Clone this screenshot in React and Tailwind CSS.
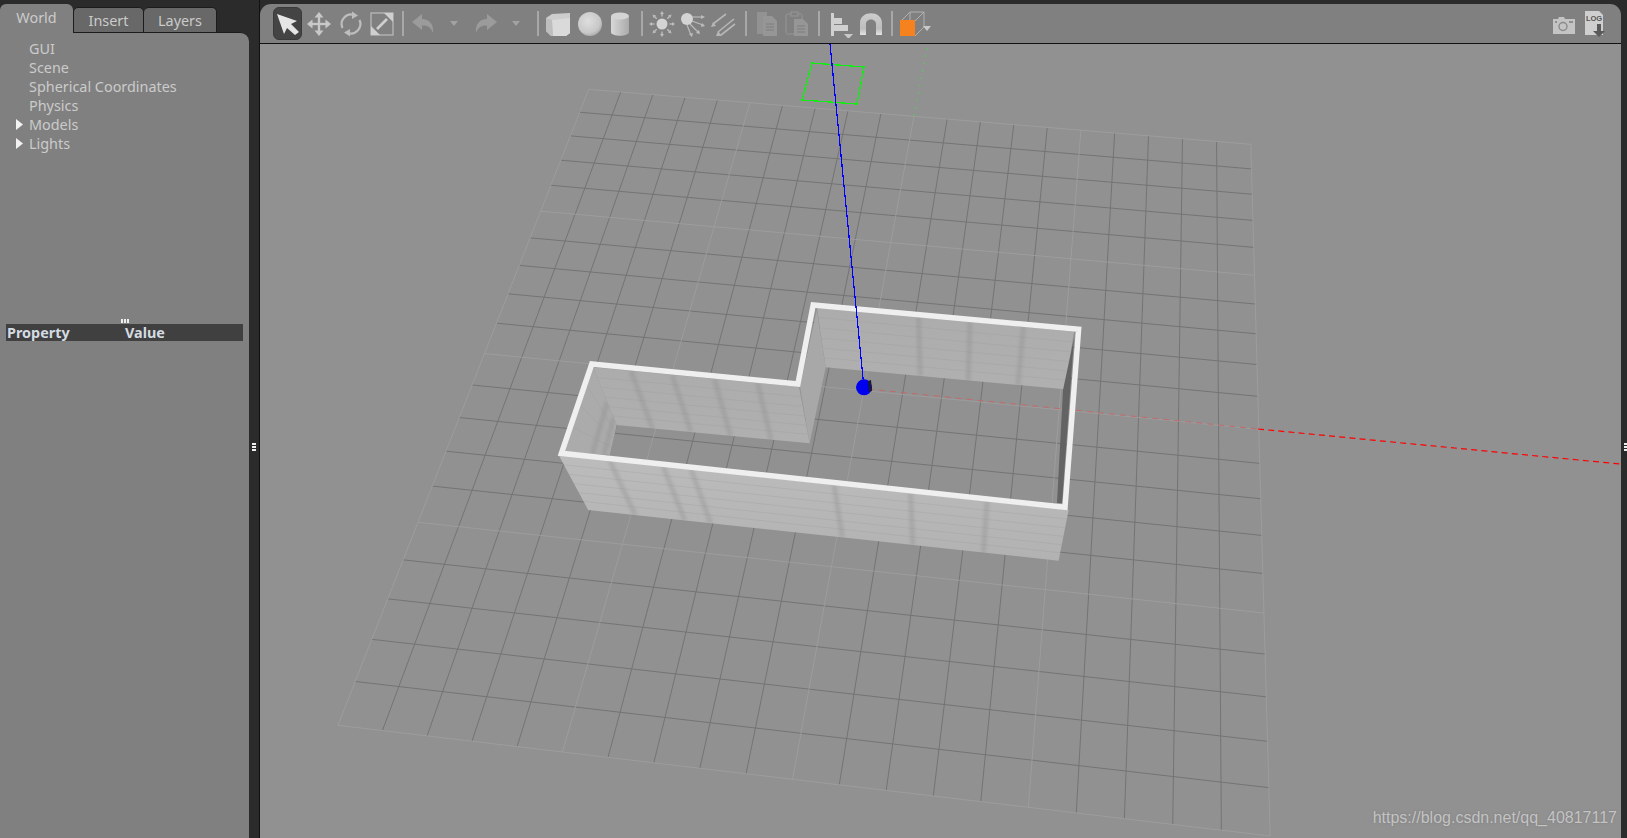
import React from "react";

const GRID = [[588.7, 89.3], [1250.8, 144.3], [1270.2, 836], [337.9, 725.3]];

function homography([p0, p1, p2, p3]) {
  const [x0, y0] = p0, [x1, y1] = p1, [x2, y2] = p2, [x3, y3] = p3;
  const dx1 = x1 - x2, dx2 = x3 - x2, sx = x0 - x1 + x2 - x3;
  const dy1 = y1 - y2, dy2 = y3 - y2, sy = y0 - y1 + y2 - y3;
  const det = dx1 * dy2 - dx2 * dy1;
  const g = (sx * dy2 - dx2 * sy) / det;
  const h = (dx1 * sy - sx * dy1) / det;
  const a = x1 - x0 + g * x1, b = x3 - x0 + h * x3;
  const d = y1 - y0 + g * y1, e = y3 - y0 + h * y3;
  return (u, v) => {
    const w = g * u + h * v + 1;
    return [(a * u + b * v + x0) / w, (d * u + e * v + y0) / w];
  };
}

const pts = (arr) => arr.map((p) => p.join(",")).join(" ");

function Grid() {
  const H = homography(GRID);
  const lines = [];
  for (let i = 0; i <= 20; i++) {
    const major = i % 5 === 0;
    const [a, b] = [H(i / 20, 0), H(i / 20, 1)];
    const [c, d] = [H(0, i / 20), H(1, i / 20)];
    const color = major ? "#9f9f9f" : "#747474";
    lines.push({ major, a, b, color, k: "v" + i }, { major, a: c, b: d, color, k: "h" + i });
  }
  lines.sort((x, y) => x.major - y.major);
  return lines.map((l) => (
    <line key={l.k} x1={l.a[0]} y1={l.a[1]} x2={l.b[0]} y2={l.b[1]} stroke={l.color} strokeWidth={l.major ? 0.8 : 1} />
  ));
}

function Wall({ quad, fill, streaks, courses = 5, streakColor = "#858585", courseColor = "#9a9a9a", id }) {
  const H = homography(quad);
  return (
    <g>
      <polygon points={pts(quad)} fill={fill} />
      {Array.from({ length: courses }, (_, i) => {
        const a = H(0, (i + 1) / (courses + 1));
        const b = H(1, (i + 1) / (courses + 1));
        return <line key={id + "c" + i} x1={a[0]} y1={a[1]} x2={b[0]} y2={b[1]} stroke={courseColor} strokeWidth="0.7" opacity="0.4" />;
      })}
      {streaks.map((u, i) => {
        const a = H(u, 0), b = H(u, 1);
        return (
          <line key={id + "s" + i} x1={a[0]} y1={a[1]} x2={b[0]} y2={b[1]} stroke={streakColor} strokeWidth="5" opacity="0.28" filter="url(#soft)" />
        );
      })}
    </g>
  );
}

function Scene() {
  return (
    <svg viewBox="260 44 1361 794" className="block w-full h-full">
      <defs>
        <filter id="soft" x="-200%" y="-20%" width="500%" height="140%" filterUnits="objectBoundingBox">
          <feGaussianBlur stdDeviation="1.6" />
        </filter>
        <linearGradient id="frontWall" x1="0" y1="0" x2="0" y2="1">
          <stop offset="0" stopColor="#bcbcbc" />
          <stop offset="1" stopColor="#b2b2b2" />
        </linearGradient>
        <linearGradient id="backWall" x1="0" y1="0" x2="0" y2="1">
          <stop offset="0" stopColor="#acacac" />
          <stop offset="1" stopColor="#b0b0b0" />
        </linearGradient>
      </defs>
      <Grid />
      {/* faded and bright X axis */}
      <line x1="868" y1="389" x2="1258" y2="429" stroke="#c46a6a" strokeWidth="1" strokeDasharray="6 5" />
      {/* green Y axis */}
      <line x1="927" y1="48" x2="914" y2="116" stroke="#3fe03f" strokeWidth="1" strokeDasharray="1.5 6" />
      {/* walls */}
      <Wall id="lf" quad={[[592.9, 367.3], [616.8, 425], [609.6, 455], [561.4, 451.7]]} fill="#ababab" streaks={[0.35, 0.7]} courses={3} />
      <Wall id="bk" quad={[[816.8, 306.7], [1074, 331.7], [1065, 389.3], [825.7, 367.3]]} fill="url(#backWall)" streaks={[0.39, 0.59, 0.8]} />
      <Wall id="sd" quad={[[816.8, 310], [825.7, 367.3], [809.6, 443.3], [800, 386.7]]} fill="#a8a8a8" streaks={[]} courses={0} />
      <Wall id="lb" quad={[[592.9, 367.3], [799, 386.7], [809.6, 443.3], [616.8, 425]]} fill="url(#backWall)" streaks={[0.185, 0.385, 0.59, 0.8]} />
      <polygon points={pts([[1074, 338.3], [1063, 390], [1057, 503], [1062, 503]])} fill="#636363" />
      <Wall id="fr" quad={[[558.6, 455], [1068.6, 510], [1058.6, 560.7], [588.2, 510]]} fill="url(#frontWall)" streaks={[0.1, 0.205, 0.26, 0.54, 0.69, 0.84]} />
      {/* wall top rim */}
      <polygon
        points="591.8,364 797.9,384 813.2,305 1078.6,329.3 1065,507.3 561.4,453.3"
        fill="none"
        stroke="#efefef"
        strokeWidth="5.5"
        strokeLinejoin="miter"
      />
      {/* Z axis + gizmo */}
      <polygon points="812,63 864,67 857,104 802,100" fill="none" stroke="#10f010" strokeWidth="1.3" shapeRendering="crispEdges" />
      <line x1="830" y1="44" x2="864" y2="388" stroke="#0000ff" strokeWidth="1.2" shapeRendering="crispEdges" />
      <circle cx="864" cy="387.3" r="8" fill="#0000f0" />
      <path d="M868 381 L871 380 L872 391 L869 392 Z" fill="#1a1a30" />
      <line x1="1258" y1="429" x2="1620" y2="464" stroke="#ff0000" strokeWidth="1.2" strokeDasharray="6 4.2" />
    </svg>
  );
}

const C = "#c8c8c8";
const D = "#9b9b9b";

function Slot({ className, children }) {
  return <div className={"flex justify-center items-center shrink-0 " + className}>{children}</div>;
}

const Svg = ({ children, w = 28, h = 28, className = "" }) => (
  <svg width={w} height={h} viewBox={`0 0 ${w} ${h}`} className={"shrink-0 block " + className}>
    {children}
  </svg>
);

const Sep = ({ className }) => (
  <Slot className={className}>
    <div className="w-[2px] h-[25px] bg-[#a8a8a8] shrink-0" />
  </Slot>
);

const Drop = ({ className, color = "#a2a2a2" }) => (
  <Slot className={className}>
    <Svg w={10} h={6}>
      <polygon points="1,0 9,0 5,5" fill={color} />
    </Svg>
  </Slot>
);

const Arrow4 = () => (
  <Svg>
    <g fill={C}>
      <rect x="12.8" y="6" width="2.4" height="16" />
      <rect x="6" y="12.8" width="16" height="2.4" />
      <polygon points="14,2 18.5,7.5 9.5,7.5" />
      <polygon points="14,26 18.5,20.5 9.5,20.5" />
      <polygon points="2,14 7.5,9.5 7.5,18.5" />
      <polygon points="26,14 20.5,9.5 20.5,18.5" />
    </g>
  </Svg>
);

const Rotate = () => (
  <Svg>
    <g fill="none" stroke="#bdbdbd" strokeWidth="2.2">
      <path d="M5.5 18 A9.5 9.5 0 0 1 17 5" />
      <path d="M22.5 10 A9.5 9.5 0 0 1 11 23" />
    </g>
    <polygon points="15,1.5 21,5.5 15,9" fill="#bdbdbd" />
    <polygon points="13,19 7,22.5 13,26.5" fill="#bdbdbd" />
  </Svg>
);

const Scale = () => (
  <Svg>
    <rect x="3" y="3" width="22" height="22" fill="none" stroke="#bdbdbd" strokeWidth="1.2" />
    <line x1="8" y1="20" x2="20" y2="8" stroke="#808080" strokeWidth="8" />
    <line x1="9" y1="19" x2="19" y2="9" stroke="#cfcfcf" strokeWidth="2.6" />
    <polygon points="25,3 25,12 16,3" fill="#cfcfcf" />
    <polygon points="3,25 3,16 12,25" fill="#cfcfcf" />
  </Svg>
);

const Undo = ({ flip }) => (
  <Svg className={flip ? "-scale-x-100" : ""}>
    <path d="M3 12 L13 4 L13 9 C20 9 25 14 24 23 C22 17 18 15 13 15.5 L13 20 Z" fill={D} />
  </Svg>
);

const Box = () => (
  <Svg>
    <polygon points="2,8 8,4 26,3 26,23 22,26 7,26 2,21" fill="#cdcdcd" />
    <polygon points="8,10 26,8 26,23 22,26 9,26" fill="#dadada" />
    <polygon points="2,8 8,10 9,26 7,26 2,21" fill="#bebebe" />
  </Svg>
);

const Sphere = () => (
  <Svg>
    <defs>
      <radialGradient id="sph" cx="0.42" cy="0.38" r="0.7">
        <stop offset="0" stopColor="#dedede" />
        <stop offset="0.7" stopColor="#c8c8c8" />
        <stop offset="1" stopColor="#a0a0a0" />
      </radialGradient>
    </defs>
    <circle cx="14" cy="14" r="12" fill="url(#sph)" />
  </Svg>
);

const Cylinder = () => (
  <Svg>
    <defs>
      <linearGradient id="cyl" x1="0" y1="0" x2="1" y2="0">
        <stop offset="0" stopColor="#d8d8d8" />
        <stop offset="1" stopColor="#aaaaaa" />
      </linearGradient>
    </defs>
    <path d="M5 6 V22 C5 27 23 27 23 22 V6 Z" fill="url(#cyl)" />
    <ellipse cx="14" cy="6" rx="9" ry="3.5" fill="#d4d4d4" />
  </Svg>
);

const Sun = () => (
  <Svg>
    <circle cx="14" cy="14" r="5.5" fill="#d4d4d4" />
    <g stroke="#bdbdbd" strokeWidth="1.4">
      <line x1="14" y1="6.5" x2="14" y2="3" />
      <line x1="14" y1="21.5" x2="14" y2="25" />
      <line x1="6.5" y1="14" x2="3" y2="14" />
      <line x1="21.5" y1="14" x2="25" y2="14" />
      <line x1="8.7" y1="8.7" x2="6" y2="6" />
      <line x1="19.3" y1="8.7" x2="22" y2="6" />
      <line x1="8.7" y1="19.3" x2="6" y2="22" />
      <line x1="19.3" y1="19.3" x2="22" y2="22" />
    </g>
    <g fill="#bdbdbd">
      <polygon points="14,1 16,4 12,4" />
      <polygon points="14,27 16,24 12,24" />
      <polygon points="1,14 4,12 4,16" />
      <polygon points="27,14 24,12 24,16" />
      <polygon points="4.5,4.5 8,5.5 5.5,8" />
      <polygon points="23.5,4.5 20,5.5 22.5,8" />
      <polygon points="4.5,23.5 8,22.5 5.5,20" />
      <polygon points="23.5,23.5 20,22.5 22.5,20" />
    </g>
  </Svg>
);

const Spot = () => (
  <Svg>
    <circle cx="9" cy="9" r="6" fill="#d4d4d4" />
    <g stroke="#bdbdbd" strokeWidth="1.1">
      <line x1="14" y1="7" x2="24" y2="7" />
      <line x1="14" y1="11" x2="25" y2="15" />
      <line x1="12" y1="14" x2="20" y2="22" />
      <line x1="9" y1="15" x2="13" y2="25" />
    </g>
    <g fill="#bdbdbd">
      <polygon points="27,7 23,5 23,9" />
      <polygon points="27,16 23,17 24,13" />
      <polygon points="22,24 18,23 21,20" />
      <polygon points="14,27 11,24 15,23" />
    </g>
  </Svg>
);

const Directional = () => (
  <Svg>
    <g stroke="#b6b6b6" strokeWidth="1.6">
      <line x1="3" y1="14" x2="16" y2="4" />
      <line x1="8" y1="22" x2="24" y2="9" />
      <line x1="11" y1="25" x2="25" y2="14" />
    </g>
    <polygon points="6,26 12,26 8,21" fill="#b6b6b6" />
    <polygon points="1,17 6,16 3,12" fill="#b6b6b6" />
  </Svg>
);

const DocLines = ({ x, y }) => (
  <g stroke="#7c7c7c" strokeWidth="1">
    <line x1={x} y1={y} x2={x + 8} y2={y} />
    <line x1={x} y1={y + 3} x2={x + 8} y2={y + 3} />
    <line x1={x} y1={y + 6} x2={x + 8} y2={y + 6} />
  </g>
);

const Copy = () => (
  <Svg>
    <polygon points="4,2 14,2 14,6 10,6 10,24 4,24" fill="#929292" />
    <polygon points="10,6 19,6 24,11 24,26 10,26" fill="#969696" />
    <DocLines x={13} y={14} />
  </Svg>
);

const Paste = () => (
  <Svg>
    <rect x="3" y="4" width="16" height="20" rx="1.5" fill="none" stroke="#969696" strokeWidth="1" />
    <rect x="8" y="2" width="7" height="4" fill="#808080" stroke="#969696" strokeWidth="1" />
    <polygon points="11,9 20,9 25,14 25,26 11,26" fill="#969696" />
    <DocLines x={14} y={16} />
  </Svg>
);

const Align = () => (
  <Svg>
    <rect x="5" y="3" width="3" height="23" fill="#d0d0d0" />
    <rect x="8" y="8" width="8" height="6" fill="#d0d0d0" />
    <rect x="8" y="15" width="14" height="6" fill="#d0d0d0" />
    <polygon points="18,24 27,24 22.5,29" fill="#c8c8c8" />
  </Svg>
);

const Magnet = () => (
  <Svg>
    <defs>
      <linearGradient id="mag" x1="0" y1="0" x2="0" y2="1">
        <stop offset="0" stopColor="#cdcdcd" />
        <stop offset="0.7" stopColor="#bdbdbd" />
        <stop offset="1" stopColor="#e4e4e4" />
      </linearGradient>
    </defs>
    <path d="M3 25 V13 C3 -0 25 -0 25 13 V25 H19 V14 C19 8 9 8 9 14 V25 Z" fill="url(#mag)" />
  </Svg>
);

const ViewCube = () => (
  <Svg w={28} h={28}>
    <g fill="none" stroke="#b0b0b0" strokeWidth="1">
      <path d="M3 11 L12 2 H26 V17 L17 26" />
      <path d="M17 11 L26 2" />
      <path d="M12 2 V11" />
    </g>
    <rect x="2" y="10" width="15" height="16" fill="#f5821f" />
  </Svg>
);

const Camera = () => (
  <Svg>
    <path d="M3 9 H8 L9 7 H14 L15 9 H25 V24 H3 Z" fill="#c4c4c4" />
    <circle cx="13" cy="16.5" r="4" fill="none" stroke="#8a8a8a" strokeWidth="1.4" />
    <rect x="19" y="11" width="4" height="2" fill="#8f8f8f" />
    <rect x="5" y="11" width="2" height="2" fill="#8f8f8f" />
  </Svg>
);

const Log = () => (
  <Svg w={28} h={30}>
    <polygon points="5,2 19,2 23,6 23,26 5,26" fill="#cfcfcf" />
    <text x="14" y="12" fontSize="7.5" fontWeight="700" textAnchor="middle" fill="#555555" fontFamily="Liberation Sans, sans-serif">LOG</text>
    <rect x="17" y="15" width="4" height="8" fill="#5a5a5a" />
    <polygon points="13,22 25,22 19,28" fill="#5a5a5a" />
  </Svg>
);

function Toolbar() {
  return (
    <div className="h-[40px] shrink-0 bg-[#808080] rounded-t-[11px] border-b border-[#111111] flex items-center pl-[13px] pr-[12px]">
      <div className="w-[29px] h-[33px] shrink-0 bg-[#444444] rounded-[6px] border border-[#3a3a3a] flex items-center justify-center">
        <Svg w={24} h={24}>
          <polygon points="1,2 21,9 15,12 23,20 19,23 11,16 8,22" fill="#e6e6e6" />
        </Svg>
      </div>
      <Slot className="w-[33px]"><Arrow4 /></Slot>
      <Slot className="w-[31px]"><Rotate /></Slot>
      <Slot className="w-[32px]"><Scale /></Slot>
      <Sep className="w-[10px]" />
      <Slot className="w-[30px]"><Undo /></Slot>
      <Drop className="w-[32px]" />
      <Slot className="w-[32px]"><Undo flip /></Slot>
      <Drop className="w-[28px]" />
      <Sep className="w-[16px]" />
      <Slot className="w-[24px]"><Box /></Slot>
      <Slot className="w-[40px]"><Sphere /></Slot>
      <Slot className="w-[20px]"><Cylinder /></Slot>
      <Sep className="w-[24px]" />
      <Slot className="w-[16px]"><Sun /></Slot>
      <Slot className="w-[44px]"><Spot /></Slot>
      <Slot className="w-[20px]"><Directional /></Slot>
      <Sep className="w-[24px]" />
      <Slot className="w-[18px]"><Copy /></Slot>
      <Slot className="w-[42px]"><Paste /></Slot>
      <Sep className="w-[2px]" />
      <Slot className="w-[40px]"><Align /></Slot>
      <Slot className="w-[22px]"><Magnet /></Slot>
      <Sep className="w-[20px]" />
      <Slot className="w-[20px]"><ViewCube /></Slot>
      <Drop className="w-[10px] mt-[10px]" color="#c8c8c8" />
      <div className="flex-1" />
      <Slot className="w-[30px]"><Camera /></Slot>
      <Slot className="w-[30px]"><Log /></Slot>
    </div>
  );
}

const Tri = () => (
  <Svg w={7} h={11}>
    <polygon points="0,0 7,5.5 0,11" fill="#f2f2f2" />
  </Svg>
);

function TreeRow({ label, arrow }) {
  return (
    <div className="h-[19px] flex items-center">
      <div className="w-[16px] shrink-0" />
      <div className="w-[13px] shrink-0">{arrow && <Tri />}</div>
      <span>{label}</span>
    </div>
  );
}

function HBars() {
  return (
    <div className="flex flex-col gap-[1px]">
      <div className="w-[4px] h-[2px] bg-[#eeeeee]" />
      <div className="w-[4px] h-[2px] bg-[#eeeeee]" />
      <div className="w-[4px] h-[2px] bg-[#eeeeee]" />
    </div>
  );
}

export default function App() {
  return (
    <div className="w-[1627px] h-[838px] bg-[#2b2b2b] flex overflow-hidden font-['Noto_Sans',sans-serif] text-[14.4px] leading-[19px] text-[#cbcbcb]">
      <aside className="w-[249px] shrink-0 flex flex-col pt-[4px]">
        <div className="h-[29px] shrink-0 flex items-end relative z-10 -mb-[1px]">
          <div className="w-[73px] h-[29px] bg-[#808080] rounded-t-[6px] flex items-center justify-center pb-[2px]">World</div>
          <div className="w-[71px] h-[26px] bg-[#686868] rounded-t-[5px] border border-[#1c1c1c] flex items-center justify-center">Insert</div>
          <div className="w-[73px] h-[26px] bg-[#686868] rounded-t-[5px] border border-[#1c1c1c] border-l-0 flex items-center justify-center">Layers</div>
        </div>
        <div className="flex-1 bg-[#808080] rounded-tr-[9px] border-t border-[#1c1c1c] flex flex-col">
          <div className="h-[286px] shrink-0 pt-[6px]">
            <TreeRow label="GUI" />
            <TreeRow label="Scene" />
            <TreeRow label="Spherical Coordinates" />
            <TreeRow label="Physics" />
            <TreeRow label="Models" arrow />
            <TreeRow label="Lights" arrow />
          </div>
          <div className="h-[5px] shrink-0 pl-[121px] flex gap-[1px] items-start">
            <div className="w-[2px] h-[4px] bg-[#eeeeee]" />
            <div className="w-[2px] h-[4px] bg-[#eeeeee]" />
            <div className="w-[2px] h-[4px] bg-[#eeeeee]" />
          </div>
          <div className="ml-[6px] w-[237px] h-[17px] shrink-0 bg-[#404040] flex items-center font-bold text-[#d4dbe2]">
            <span className="w-[119px] pl-[1px]">Property</span>
            <span>Value</span>
          </div>
        </div>
      </aside>

      <div className="w-[11px] shrink-0 border-r border-[#111111] pt-[443px] pl-[3px]">
        <HBars />
      </div>

      <main className="flex-1 min-w-0 flex flex-col pt-[4px]">
        <Toolbar />
        <div className="flex-1 min-h-0 bg-[#919191] relative overflow-hidden">
          <Scene />
          <div className="absolute right-[4px] bottom-[11px] font-['Liberation_Sans',sans-serif] text-[16px] leading-[18px] text-[#c4c4c4] [text-shadow:0_0_2px_#777777]">
            https://blog.csdn.net/qq_40817117
          </div>
        </div>
      </main>

      <div className="w-[6px] shrink-0 pt-[443px] pl-[3px]">
        <HBars />
      </div>
    </div>
  );
}
